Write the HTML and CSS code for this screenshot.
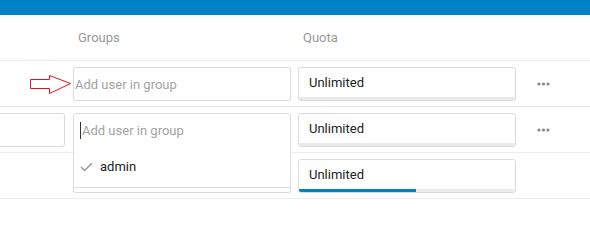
FILE: index.html
```html
<!DOCTYPE html>
<html lang="en">
<head>
  <meta charset="UTF-8" />
  <title>Users</title>
  <link rel="stylesheet" href="styles.css">
</head>
<body>
  <div class="topbar"></div>

  <div class="userlist">
    <div class="row head">
      <div class="cell"></div>
      <div class="cell label">Groups</div>
      <div class="cell label">Quota</div>
      <div class="cell"></div>
    </div>

    <div class="row">
      <div class="cell pointer">
        <svg width="42" height="20" viewBox="0 0 42 20">
          <path d="M0.5 4.5 H19.5 V0.5 L40.5 8.5 L19.5 18.5 V13.5 H0.5 Z" fill="none" stroke="#e3121b" stroke-width="1"/>
        </svg>
      </div>
      <div class="cell">
        <div class="field tight"><span class="placeholder">Add user in group</span></div>
      </div>
      <div class="cell">
        <div class="quota">
          <span class="value">Unlimited</span>
          <div class="bar"><div class="fill" style="width:0%"></div></div>
        </div>
      </div>
      <div class="cell actions">
        <svg width="13" height="4" viewBox="0 0 13 4"><circle cx="2" cy="2" r="1.6" fill="#888"/><circle cx="6.5" cy="2" r="1.6" fill="#888"/><circle cx="11" cy="2" r="1.6" fill="#888"/></svg>
      </div>
    </div>

    <div class="row">
      <div class="cell">
        <div class="field cut"></div>
      </div>
      <div class="cell groups-open">
        <div class="field focus"><span class="caret"></span><span class="placeholder">Add user in group</span></div>
        <div class="dropdown">
          <div class="option">
            <svg width="13" height="10" viewBox="0 0 13 10"><path d="M1 5 L4.5 8.5 L12 1.2" fill="none" stroke="#9a9a9a" stroke-width="1.6"/></svg>
            <span>admin</span>
          </div>
          <div class="option more"></div>
        </div>
      </div>
      <div class="cell">
        <div class="quota">
          <span class="value">Unlimited</span>
          <div class="bar"><div class="fill" style="width:0%"></div></div>
        </div>
      </div>
      <div class="cell actions">
        <svg width="13" height="4" viewBox="0 0 13 4"><circle cx="2" cy="2" r="1.6" fill="#888"/><circle cx="6.5" cy="2" r="1.6" fill="#888"/><circle cx="11" cy="2" r="1.6" fill="#888"/></svg>
      </div>
    </div>

    <div class="row">
      <div class="cell"></div>
      <div class="cell"></div>
      <div class="cell">
        <div class="quota">
          <span class="value">Unlimited</span>
          <div class="bar"><div class="fill" style="width:54%"></div></div>
        </div>
      </div>
      <div class="cell"></div>
    </div>
  </div>
</body>
</html>
```

FILE: styles.css
```css
body {
  margin: 0;
  font-family: Roboto, "Noto Sans", sans-serif;
  font-size: 13px;
  color: #222;
  background: #fff;
}

.topbar {
  height: 15px;
  background: #0082c9;
}

.row {
  display: grid;
  grid-template-columns: 73px 225px 225px 1fr;
  height: 45px;
  border-bottom: 1px solid #ededed;
  align-items: start;
}

.row .cell {
  padding-top: 6px;
  height: 34px;
}

.row.head .cell {
  padding-top: 0;
  height: 45px;
  display: flex;
  align-items: center;
}

.label {
  color: #999;
  padding-left: 5px;
}

.pointer {
  display: flex;
  justify-content: flex-end;
  align-items: center;
}

.pointer svg {
  margin-right: 1px;
  margin-top: 1px;
}

.field {
  box-sizing: border-box;
  width: 218px;
  height: 34px;
  border: 1px solid #dbdbdb;
  border-radius: 3px;
  display: flex;
  align-items: center;
  padding-left: 6px;
  background: #fff;
}

.field.tight {
  padding-left: 1px;
}

.field.cut {
  width: 75px;
  margin-left: -10px;
}

.placeholder {
  color: #a3a3a3;
}

.caret {
  width: 1px;
  height: 17px;
  background: #333;
  margin-right: 1px;
}

.groups-open {
  position: relative;
}

.field.focus {
  border-radius: 3px 3px 0 0;
}

.dropdown {
  position: absolute;
  left: 0;
  top: 39px;
  box-sizing: border-box;
  width: 218px;
  height: 47px;
  border: 1px solid #dbdbdb;
  border-top: none;
  border-radius: 0 0 3px 3px;
  background: #fff;
  overflow: hidden;
  z-index: 2;
}

.option {
  height: 41px;
  display: flex;
  align-items: center;
  gap: 7px;
  padding-left: 6px;
  border-bottom: 1px solid #dbdbdb;
}

.option.more {
  border-bottom: none;
}

.quota {
  box-sizing: border-box;
  width: 218px;
  height: 34px;
  border: 1px solid #dbdbdb;
  border-radius: 3px;
  display: flex;
  flex-direction: column;
  overflow: hidden;
}

.quota .value {
  flex: 1;
  display: flex;
  align-items: center;
  padding-left: 10px;
}

.bar {
  height: 3px;
  background: #ebebeb;
}

.bar .fill {
  height: 100%;
  background: #0082c9;
}

.actions {
  display: flex;
  align-items: center;
  padding-left: 14px;
}
```
